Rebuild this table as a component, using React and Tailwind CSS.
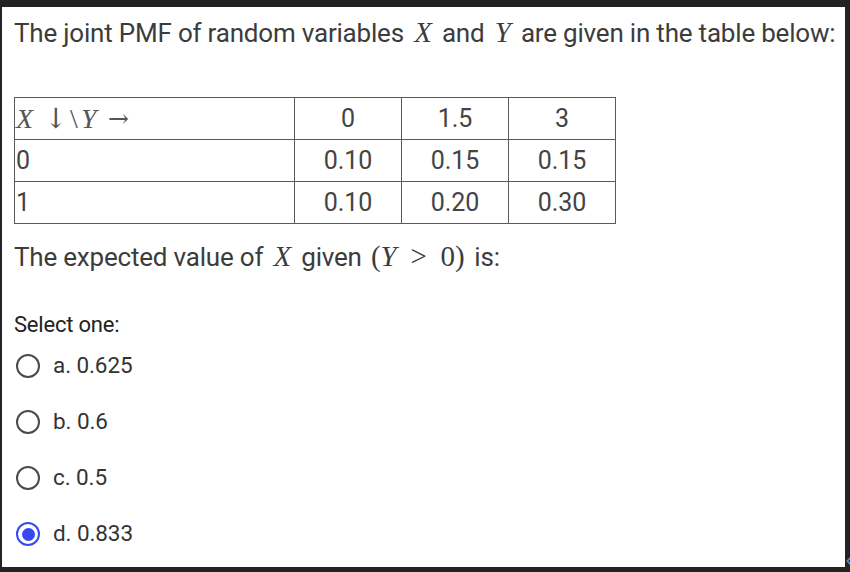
import { ChevronLeft } from 'lucide-react';

const cols = ['0', '1.5', '3'];
const rows = [
  { x: '0', p: ['0.10', '0.15', '0.15'] },
  { x: '1', p: ['0.10', '0.20', '0.30'] },
];
const options = [
  { key: 'a', label: '0.625' },
  { key: 'b', label: '0.6' },
  { key: 'c', label: '0.5' },
  { key: 'd', label: '0.833', checked: true },
];

function M({ children }) {
  return <span className="font-['Liberation_Serif',serif] italic text-[29px] mx-[4px]">{children}</span>;
}

function Radio({ checked }) {
  if (checked) {
    return (
      <span className="w-[24px] h-[24px] rounded-full border-[2.5px] border-[#3848f0] flex items-center justify-center">
        <span className="w-[13px] h-[13px] rounded-full bg-[#3848f0]" />
      </span>
    );
  }
  return <span className="w-[24px] h-[24px] rounded-full border-[2.5px] border-[#4a4a4a]" />;
}

export default function App() {
  return (
    <div className="w-[850px] h-[572px] bg-[#232323] pt-[7px] pl-[2px] relative">
      <div className="w-[843px] h-[560px] bg-white text-[#3c3c3c] font-['Roboto',sans-serif] px-[12px]">
        <p className="text-[26px] leading-[30px] pt-[10px] tracking-[-0.2px] whitespace-nowrap">
          The joint PMF of random variables <M>X</M> and <M>Y</M> are given in the table below:
        </p>

        <table className="mt-[49px] border-collapse text-[25px] text-[#444]">
          <tbody>
            <tr className="h-[42px]">
              <td className="border border-[#5a5a5a] w-[280px] px-[1px] text-left font-['Liberation_Serif',serif] text-[28px] leading-none">
                <span className="flex items-center text-[#555]">
                  <i className="w-[22px]">X</i>
                  <span className="ml-[6px] w-[14px] font-['DejaVu_Serif',serif] text-[28px]">↓</span>
                  <span className="ml-[12px] w-[11px]">\</span>
                  <i className="w-[20px]">Y</i>
                  <span className="ml-[7px] w-[24px] font-['DejaVu_Serif',serif] text-[25px]">→</span>
                </span>
              </td>
              {cols.map((c) => (
                <td key={c} className="border border-[#5a5a5a] w-[107px] text-center">{c}</td>
              ))}
            </tr>
            {rows.map((r) => (
              <tr key={r.x} className="h-[42px]">
                <td className="border border-[#5a5a5a] px-[1px] text-left">{r.x}</td>
                {r.p.map((v, i) => (
                  <td key={i} className="border border-[#5a5a5a] text-center">{v}</td>
                ))}
              </tr>
            ))}
          </tbody>
        </table>

        <p className="text-[26px] leading-[30px] mt-[17px] tracking-[-0.2px] whitespace-nowrap">
          The expected value of <M>X</M> given{' '}
          <span className="font-['Liberation_Serif',serif] text-[29px] ml-[3px]">
            (<i>Y</i><span className="mx-[14px]">&gt;</span>0)
          </span>
          <span className="ml-[10px]">is:</span>
        </p>

        <p className="text-[22px] text-[#222] mt-[36px] tracking-[-0.2px]">Select one:</p>

        <div className="mt-[12px] flex flex-col gap-[30px] pl-[2px]">
          {options.map((o) => (
            <label key={o.key} className="flex items-center gap-[13px] h-[26px] text-[22.5px] text-[#333] tracking-[-0.1px]">
              <Radio checked={o.checked} />
              <span>{o.key}. {o.label}</span>
            </label>
          ))}
        </div>
      </div>
      <ChevronLeft className="absolute right-[-6px] bottom-[4px] w-[14px] h-[14px] text-[#4a90e2]" strokeWidth={3} />
    </div>
  );
}
